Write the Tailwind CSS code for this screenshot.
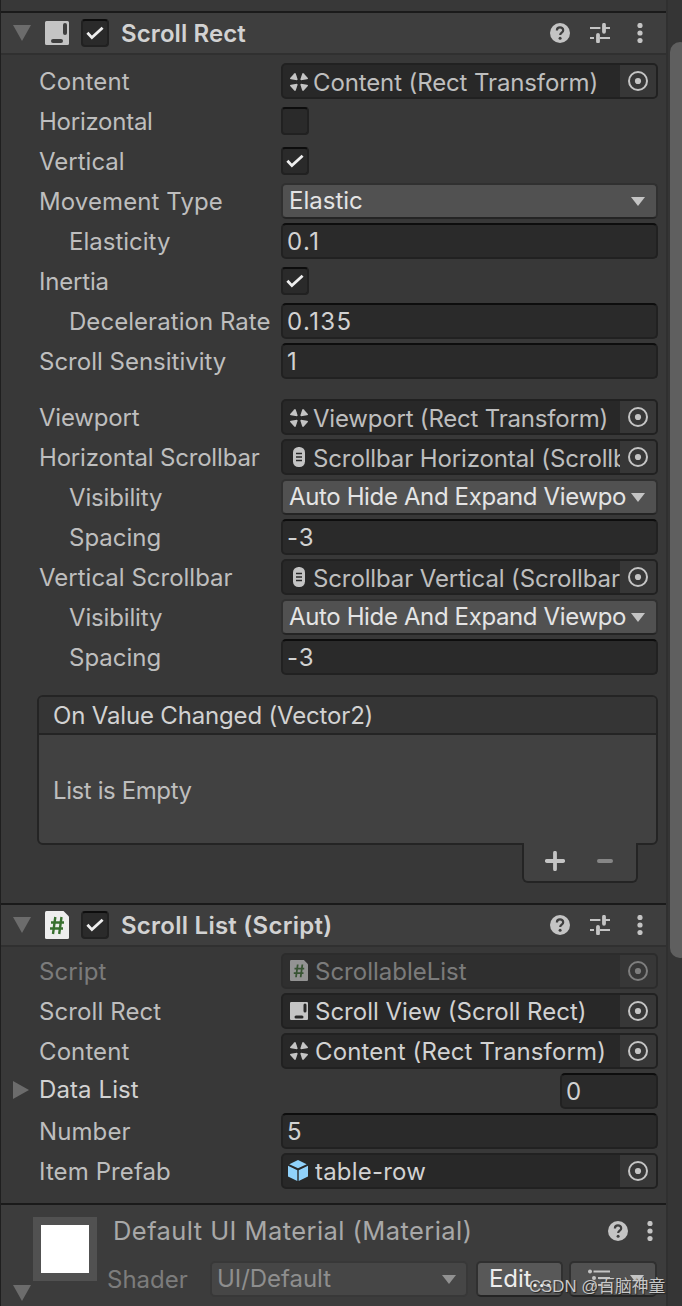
<!DOCTYPE html>
<html lang="en">
<head>
<meta charset="utf-8">
<title>Inspector</title>
<script src="https://cdn.jsdelivr.net/npm/@tailwindcss/browser@4"></script>
</head>
<body class="bg-[#383838]">
<svg class="hidden">
  <symbol id="help" viewBox="0 0 20 20"><circle cx="10" cy="10" r="10" fill="#c4c4c4"/><path d="M6.900 7.400C6.900 5.400 8.200 4.300 10 4.300s3.200 1.100 3.200 2.900c0 2.300-3 2.400-3 4.700" fill="none" stroke="#3e3e3e" stroke-width="2.200"/><circle cx="10.100" cy="15.200" r="1.500" fill="#3e3e3e"/></symbol>
  <symbol id="preset" viewBox="0 0 20 20"><path d="M0 5h10.400M15 5h5M0 15h4M10 15h10" stroke="#c4c4c4" stroke-width="2"/><path d="M14 1.800v7M8 11.800v6.600" stroke="#c4c4c4" stroke-width="3.800" stroke-linecap="round"/></symbol>
  <symbol id="dots" viewBox="0 0 6 20"><g fill="#c4c4c4"><circle cx="3" cy="2.500" r="2.600"/><circle cx="3" cy="10" r="2.600"/><circle cx="3" cy="17.500" r="2.600"/></g></symbol>
  <symbol id="check" viewBox="0 0 24 24"><path d="M4.400 11.800 8.900 16.600 19.600 6.700" fill="none" stroke="#eee" stroke-width="2.800"/></symbol>
  <symbol id="srect" viewBox="0 0 24 24"><path fill="#c4c4c4" fill-rule="evenodd" d="M1.500 0h21q1.500 0 1.500 1.500v21q0 1.500-1.500 1.500h-21Q0 24 0 22.500v-21Q0 0 1.500 0zM20 2q-2 0-2 2v8q0 2 2 2t2-2V4q0-2-2-2zM8 18q-2 0-2 2t2 2h8q2 0 2-2t-2-2z"/></symbol>
  <symbol id="script" viewBox="0 0 24 28"><path d="M1.500 0H18.500L24 5.500V26.500Q24 28 22.500 28h-21Q0 28 0 26.500v-25Q0 0 1.500 0z" fill="#eee"/><path d="M10.300 6 8 23M16.500 6l-2.300 17M6 11.500h13M5 17.500h13" stroke="#38702f" stroke-width="2.400" fill="none"/></symbol>
  <symbol id="rt" viewBox="0 0 18 18"><g fill="#c4c4c4"><path id="d" d="M.2 4.900 4.200.4Q5.300-.4 5.800.8L7.700 6.400 6.800 7.300 1 6.200Q-.4 5.800.2 4.900z"/><use href="#d" transform="matrix(-1 0 0 1 18 0)"/><use href="#d" transform="matrix(1 0 0 -1 0 18)"/><use href="#d" transform="matrix(-1 0 0 -1 18 18)"/></g></symbol>
  <symbol id="sbar" viewBox="0 0 12 20"><rect width="12" height="20" rx="5.500" fill="#c4c4c4"/><path d="M3 6.500h6M3 10h6M3 13.500h6" stroke="#282828" stroke-width="1.600"/></symbol>
  <symbol id="pick" viewBox="0 0 20 20"><circle cx="10" cy="10" r="9" fill="none" stroke="#c4c4c4" stroke-width="2"/><circle cx="10" cy="10" r="3.100" fill="#c4c4c4"/></symbol>
  <symbol id="cube" viewBox="0 0 20 21"><path d="M10 0 18.700 4.200 10 8.300 1.300 4.200zM0 5.800 9.300 10.200V21L0 16.500zM20 5.800 10.700 10.200V21L20 16.500z" fill="#90d2fb"/></symbol>
  <symbol id="down" viewBox="0 0 18 16"><path d="M0 0h18L9 16z" fill="#6c6c6c"/></symbol>
  <symbol id="caret" viewBox="0 0 14 9"><path d="M0 0h14L7 9z" fill="#c4c4c4"/></symbol>
</svg>
<div class="relative flex h-[1306px] w-[682px] overflow-hidden whitespace-nowrap bg-[#383838] font-['Inter',sans-serif] text-[24px] leading-[40px] text-[#bebebe]">
  <main class="flex w-[666px] shrink-0 flex-col border-l border-[#1f1f1f]">
    <!-- Scroll Rect -->
    <header class="mt-[11px] flex h-11 shrink-0 items-center border-t-2 border-b-2 border-t-[#1a1a1a] border-b-[#303030] bg-[#3e3e3e] pl-3">
      <svg class="h-4 w-[18px]"><use href="#down"/></svg>
      <svg class="ml-3.5 h-6 w-6"><use href="#srect"/></svg>
      <span class="ml-3 h-7 w-7 rounded-[4px] border-2 border-[#212121] border-t-[#0d0d0d] bg-[#2a2a2a]"><svg class="h-6 w-6"><use href="#check"/></svg></span>
      <b class="ml-3 pt-px font-semibold tracking-[0.100px] text-[#d2d2d2]">Scroll Rect</b>
      <svg class="ml-auto h-5 w-5"><use href="#help"/></svg>
      <svg class="ml-5 h-5 w-5"><use href="#preset"/></svg>
      <svg class="ml-[27px] mr-[23px] h-5 w-1.5"><use href="#dots"/></svg>
    </header>
    <section class="flex flex-col pt-1.5 pl-[38px]">
      <div class="flex h-10 items-center"><span class="w-[242px] pt-px tracking-[0.150px]">Content</span>
        <div class="flex h-9 w-[377px] overflow-hidden rounded-[5px] border-2 border-[#212121] bg-[#282828]"><svg class="mt-2 ml-[7px] h-[18px] w-[18px] shrink-0"><use href="#rt"/></svg><span class="ml-[5px] w-[307px] overflow-hidden leading-[36px] tracking-[-0.120px]">Content (Rect Transform)</span><span class="flex w-9 shrink-0 justify-center bg-[#373737] pt-1.5"><svg class="h-5 w-5"><use href="#pick"/></svg></span></div></div>
      <div class="flex h-10 items-center"><span class="w-[242px] pt-px tracking-[-0.250px]">Horizontal</span><span class="h-7 w-7 rounded-[4px] border-2 border-[#212121] border-t-[#0d0d0d] bg-[#2a2a2a]"></span></div>
      <div class="flex h-10 items-center"><span class="w-[242px] pt-px">Vertical</span><span class="h-7 w-7 rounded-[4px] border-2 border-[#212121] border-t-[#0d0d0d] bg-[#2a2a2a]"><svg class="h-6 w-6"><use href="#check"/></svg></span></div>
      <div class="flex h-10 items-center"><span class="w-[242px] pt-px tracking-[0.100px]">Movement Type</span>
        <div class="flex h-9 w-[377px] items-start rounded-[5px] border-2 border-[#303030] border-b-[#242424] bg-[#515151] pl-1.5 text-[#e4e4e4]"><span class="w-[337px] overflow-hidden leading-[32px]">Elastic</span><svg class="mt-3 ml-[5px] h-[9px] w-3.5"><use href="#caret"/></svg></div></div>
      <div class="flex h-10 items-center"><span class="w-[242px] pt-px pl-[30px]">Elasticity</span><div class="h-9 w-[377px] rounded-[5px] border-2 border-[#212121] border-t-[#0d0d0d] bg-[#2a2a2a] pl-1 leading-[34px] tracking-[1.500px] text-[#d2d2d2]">0.1</div></div>
      <div class="flex h-10 items-center"><span class="w-[242px] pt-px tracking-[-0.200px]">Inertia</span><span class="h-7 w-7 rounded-[4px] border-2 border-[#212121] border-t-[#0d0d0d] bg-[#2a2a2a]"><svg class="h-6 w-6"><use href="#check"/></svg></span></div>
      <div class="flex h-10 items-center"><span class="w-[242px] pt-px pl-[30px] tracking-[0.050px]">Deceleration Rate</span><div class="h-9 w-[377px] rounded-[5px] border-2 border-[#212121] border-t-[#0d0d0d] bg-[#2a2a2a] pl-1 leading-[34px] tracking-[1.400px] text-[#d2d2d2]">0.135</div></div>
      <div class="flex h-10 items-center"><span class="w-[242px] pt-px">Scroll Sensitivity</span><div class="h-9 w-[377px] rounded-[5px] border-2 border-[#212121] border-t-[#0d0d0d] bg-[#2a2a2a] pl-1 leading-[34px] text-[#d2d2d2]">1</div></div>
      <div class="mt-4 flex h-10 items-center"><span class="w-[242px] pt-px tracking-[-0.200px]">Viewport</span>
        <div class="flex h-9 w-[377px] overflow-hidden rounded-[5px] border-2 border-[#212121] bg-[#282828]"><svg class="mt-2 ml-[7px] h-[18px] w-[18px] shrink-0"><use href="#rt"/></svg><span class="ml-[5px] w-[307px] overflow-hidden leading-[36px] tracking-[-0.200px]">Viewport (Rect Transform)</span><span class="flex w-9 shrink-0 justify-center bg-[#373737] pt-1.5"><svg class="h-5 w-5"><use href="#pick"/></svg></span></div></div>
      <div class="flex h-10 items-center"><span class="w-[242px] pt-px tracking-[-0.180px]">Horizontal Scrollbar</span>
        <div class="flex h-9 w-[377px] overflow-hidden rounded-[5px] border-2 border-[#212121] bg-[#282828]"><svg class="mt-1.5 ml-[10px] h-5 w-3 shrink-0"><use href="#sbar"/></svg><span class="ml-2 w-[307px] overflow-hidden leading-[36px] tracking-[-0.120px]">Scrollbar Horizontal (Scrollbar)</span><span class="flex w-9 shrink-0 justify-center bg-[#373737] pt-1.5"><svg class="h-5 w-5"><use href="#pick"/></svg></span></div></div>
      <div class="flex h-10 items-center"><span class="w-[242px] pt-px pl-[30px] tracking-[-0.150px]">Visibility</span>
        <div class="flex h-9 w-[377px] items-start rounded-[5px] border-2 border-[#303030] border-b-[#242424] bg-[#515151] pl-1.5 text-[#e4e4e4]"><span class="w-[337px] overflow-hidden leading-[32px] tracking-[-0.370px]">Auto Hide And Expand Viewpo</span><svg class="mt-3 ml-[5px] h-[9px] w-3.5"><use href="#caret"/></svg></div></div>
      <div class="flex h-10 items-center"><span class="w-[242px] pt-px pl-[30px]">Spacing</span><div class="h-9 w-[377px] rounded-[5px] border-2 border-[#212121] border-t-[#0d0d0d] bg-[#2a2a2a] pl-1 leading-[34px] tracking-[1px] text-[#d2d2d2]">-3</div></div>
      <div class="flex h-10 items-center"><span class="w-[242px] pt-px">Vertical Scrollbar</span>
        <div class="flex h-9 w-[377px] overflow-hidden rounded-[5px] border-2 border-[#212121] bg-[#282828]"><svg class="mt-1.5 ml-[10px] h-5 w-3 shrink-0"><use href="#sbar"/></svg><span class="ml-2 w-[307px] overflow-hidden leading-[36px] tracking-[-0.120px]">Scrollbar Vertical (Scrollbar)</span><span class="flex w-9 shrink-0 justify-center bg-[#373737] pt-1.5"><svg class="h-5 w-5"><use href="#pick"/></svg></span></div></div>
      <div class="flex h-10 items-center"><span class="w-[242px] pt-px pl-[30px] tracking-[-0.150px]">Visibility</span>
        <div class="flex h-9 w-[377px] items-start rounded-[5px] border-2 border-[#303030] border-b-[#242424] bg-[#515151] pl-1.5 text-[#e4e4e4]"><span class="w-[337px] overflow-hidden leading-[32px] tracking-[-0.370px]">Auto Hide And Expand Viewpo</span><svg class="mt-3 ml-[5px] h-[9px] w-3.5"><use href="#caret"/></svg></div></div>
      <div class="flex h-10 items-center"><span class="w-[242px] pt-px pl-[30px]">Spacing</span><div class="h-9 w-[377px] rounded-[5px] border-2 border-[#212121] border-t-[#0d0d0d] bg-[#2a2a2a] pl-1 leading-[34px] tracking-[1px] text-[#d2d2d2]">-3</div></div>
    </section>
    <!-- Event list -->
    <section class="mt-[18px] ml-9 flex h-[188px] w-[621px] shrink-0 flex-col">
      <div class="h-[150px] shrink-0 rounded-[6px] border-2 border-[#242424] bg-[#414141]">
        <div class="h-[38px] rounded-t-[4px] border-b-2 border-[#242424] bg-[#353535] pl-3.5 leading-[37px] tracking-[-0.170px] text-[#d2d2d2]">On Value Changed (Vector2)</div>
        <div class="pt-9 pl-3.5 tracking-[-0.400px]">List is Empty</div>
      </div>
      <div class="relative -mt-0.5 mr-5 ml-auto flex h-10 w-[116px] items-start rounded-b-[6px] border-2 border-t-0 border-[#242424] bg-[#414141] pt-2 pl-[21px]">
        <svg class="h-5 w-5"><path d="M10 1.800v16.400M1.800 10h16.400" stroke="#c4c4c4" stroke-width="3.800" stroke-linecap="round"/></svg>
        <svg class="ml-8 h-5 w-4"><path d="M1.900 10h12.200" stroke="#868686" stroke-width="3.800" stroke-linecap="round"/></svg>
      </div>
    </section>
    <!-- Scroll List -->
    <header class="mt-5 flex h-11 shrink-0 items-center border-t-2 border-b-2 border-t-[#1a1a1a] border-b-[#303030] bg-[#3e3e3e] pl-3">
      <svg class="h-4 w-[18px]"><use href="#down"/></svg>
      <svg class="ml-3.5 h-7 w-6"><use href="#script"/></svg>
      <span class="ml-3 h-7 w-7 rounded-[4px] border-2 border-[#212121] border-t-[#0d0d0d] bg-[#2a2a2a]"><svg class="h-6 w-6"><use href="#check"/></svg></span>
      <b class="ml-3 pt-px font-semibold tracking-[0.250px] text-[#d2d2d2]">Scroll List (Script)</b>
      <svg class="ml-auto h-5 w-5"><use href="#help"/></svg>
      <svg class="ml-5 h-5 w-5"><use href="#preset"/></svg>
      <svg class="ml-[27px] mr-[23px] h-5 w-1.5"><use href="#dots"/></svg>
    </header>
    <section class="flex flex-col pt-1 pl-[38px] tracking-[0.100px]">
      <div class="flex h-10 items-center opacity-50"><span class="w-[242px] pt-px">Script</span>
        <div class="flex h-9 w-[377px] overflow-hidden rounded-[5px] border-2 border-[#212121] bg-[#282828]"><svg class="mt-[5px] ml-[7px] h-[21px] w-[18px] shrink-0"><use href="#script"/></svg><span class="ml-[7px] w-[305px] overflow-hidden leading-[34px] tracking-normal">ScrollableList</span><span class="flex w-9 shrink-0 justify-center bg-[#373737] pt-1.5"><svg class="h-5 w-5"><use href="#pick"/></svg></span></div></div>
      <div class="flex h-10 items-center"><span class="w-[242px] pt-px">Scroll Rect</span>
        <div class="flex h-9 w-[377px] overflow-hidden rounded-[5px] border-2 border-[#212121] bg-[#282828]"><svg class="mt-[7px] ml-[7px] h-[18px] w-[18px] shrink-0"><use href="#srect"/></svg><span class="ml-[7px] w-[305px] overflow-hidden leading-[34px] tracking-normal text-[#d2d2d2]">Scroll View (Scroll Rect)</span><span class="flex w-9 shrink-0 justify-center bg-[#373737] pt-1.5"><svg class="h-5 w-5"><use href="#pick"/></svg></span></div></div>
      <div class="flex h-10 items-center"><span class="w-[242px] pt-px">Content</span>
        <div class="flex h-9 w-[377px] overflow-hidden rounded-[5px] border-2 border-[#212121] bg-[#282828]"><svg class="mt-[7px] ml-[7px] h-[18px] w-[18px] shrink-0"><use href="#rt"/></svg><span class="ml-[7px] w-[305px] overflow-hidden leading-[34px] tracking-[0.130px] text-[#d2d2d2]">Content (Rect Transform)</span><span class="flex w-9 shrink-0 justify-center bg-[#373737] pt-1.5"><svg class="h-5 w-5"><use href="#pick"/></svg></span></div></div>
      <div class="-ml-[26px] flex h-10 items-center"><svg class="-mt-0.5 h-[18px] w-4"><path d="M0 0v18l16-9z" fill="#6c6c6c"/></svg><span class="ml-2.5 w-[521px] pb-0.5 leading-[38px] text-[#d2d2d2]">Data List</span><div class="h-9 w-[98px] rounded-[5px] border-2 border-[#212121] border-t-[#0d0d0d] bg-[#2a2a2a] pl-1 leading-[34px] text-[#d2d2d2]">0</div></div>
      <div class="flex h-10 items-center"><span class="w-[242px] pt-px">Number</span><div class="h-9 w-[377px] rounded-[5px] border-2 border-[#212121] border-t-[#0d0d0d] bg-[#2a2a2a] pl-1 leading-[34px] text-[#d2d2d2]">5</div></div>
      <div class="flex h-10 items-center"><span class="w-[242px] pt-px">Item Prefab</span>
        <div class="flex h-9 w-[377px] overflow-hidden rounded-[5px] border-2 border-[#212121] bg-[#282828]"><svg class="mt-[5px] ml-[5px] h-[21px] w-5 shrink-0"><use href="#cube"/></svg><span class="ml-[7px] w-[305px] overflow-hidden leading-[34px] tracking-[0.200px] text-[#d2d2d2]">table-row</span><span class="flex w-9 shrink-0 justify-center bg-[#373737] pt-1.5"><svg class="h-5 w-5"><use href="#pick"/></svg></span></div></div>
    </section>
    <!-- Material -->
    <section class="mt-3 flex h-[103px] shrink-0 border-t-2 border-[#1a1a1a] bg-[#3c3c3c] pl-3">
      <svg class="mt-20 h-4 w-[18px] shrink-0"><use href="#down"/></svg>
      <div class="mt-3 ml-0.5 h-16 w-16 shrink-0 border-8 border-[#515151] bg-white"></div>
      <div class="flex flex-1 flex-col pl-2.5">
        <div class="mt-1.5 flex h-10 items-center"><span class="ml-1.5 text-[25.500px] tracking-[0.430px] text-[#a8a8a8]">Default UI Material (Material)</span>
          <svg class="ml-auto h-5 w-5"><use href="#help"/></svg><svg class="mr-[13px] ml-[19px] h-5 w-1.5"><use href="#dots"/></svg></div>
        <div class="mt-2.5 flex h-10 items-start">
          <span class="w-[103px] leading-[38px] text-[#7c7c7c]">Shader</span>
          <div class="flex h-9 w-[258px] rounded-[5px] border-2 border-[#383838] bg-[#464646] pl-[5px] leading-[32px] text-[#8e8e8e]"><span class="w-[225px] tracking-[-0.050px]">UI/Default</span><svg class="mt-3 h-[9px] w-3.5 opacity-60"><use href="#caret"/></svg></div>
          <div class="ml-2 h-9 w-[87px] rounded-[5px] border-2 border-[#303030] border-b-[#242424] bg-[#585858] pl-[11px] leading-[32px] tracking-[-0.100px] text-[#eee]">Edit...</div>
          <div class="ml-1.5 flex h-9 w-[88px] rounded-[5px] border-2 border-[#303030] border-b-[#242424] bg-[#515151] pt-1.5 pl-[17px]"><svg class="h-5 w-[22px]"><g fill="#c4c4c4"><circle cx="2" cy="2.500" r="2"/><circle cx="6" cy="9" r="2"/><circle cx="6" cy="16" r="2"/><path d="M5.500 1.500H22v2H5.500zM10 8h12v2H10zM10 15h12v2H10z"/></g></svg><svg class="mt-1.5 ml-5 h-[9px] w-3.5"><use href="#caret"/></svg></div>
        </div>
      </div>
    </section>
  </main>
  <aside class="w-4 border-l-2 border-[#303030] bg-[#353535] pt-[42px] pl-0.5"><div class="h-[916px] w-5 rounded-[10px] bg-[#5f5f5f]"></div></aside>
  <div class="absolute top-[1273px] left-[529px] font-['Liberation_Sans','Noto_Sans_CJK_SC',sans-serif] text-[16.800px] leading-7 tracking-normal text-[#c8c8c8] [text-shadow:1px_1px_1px_#222]">CSDN @百脑神童</div>
</div>
</body>
</html>
